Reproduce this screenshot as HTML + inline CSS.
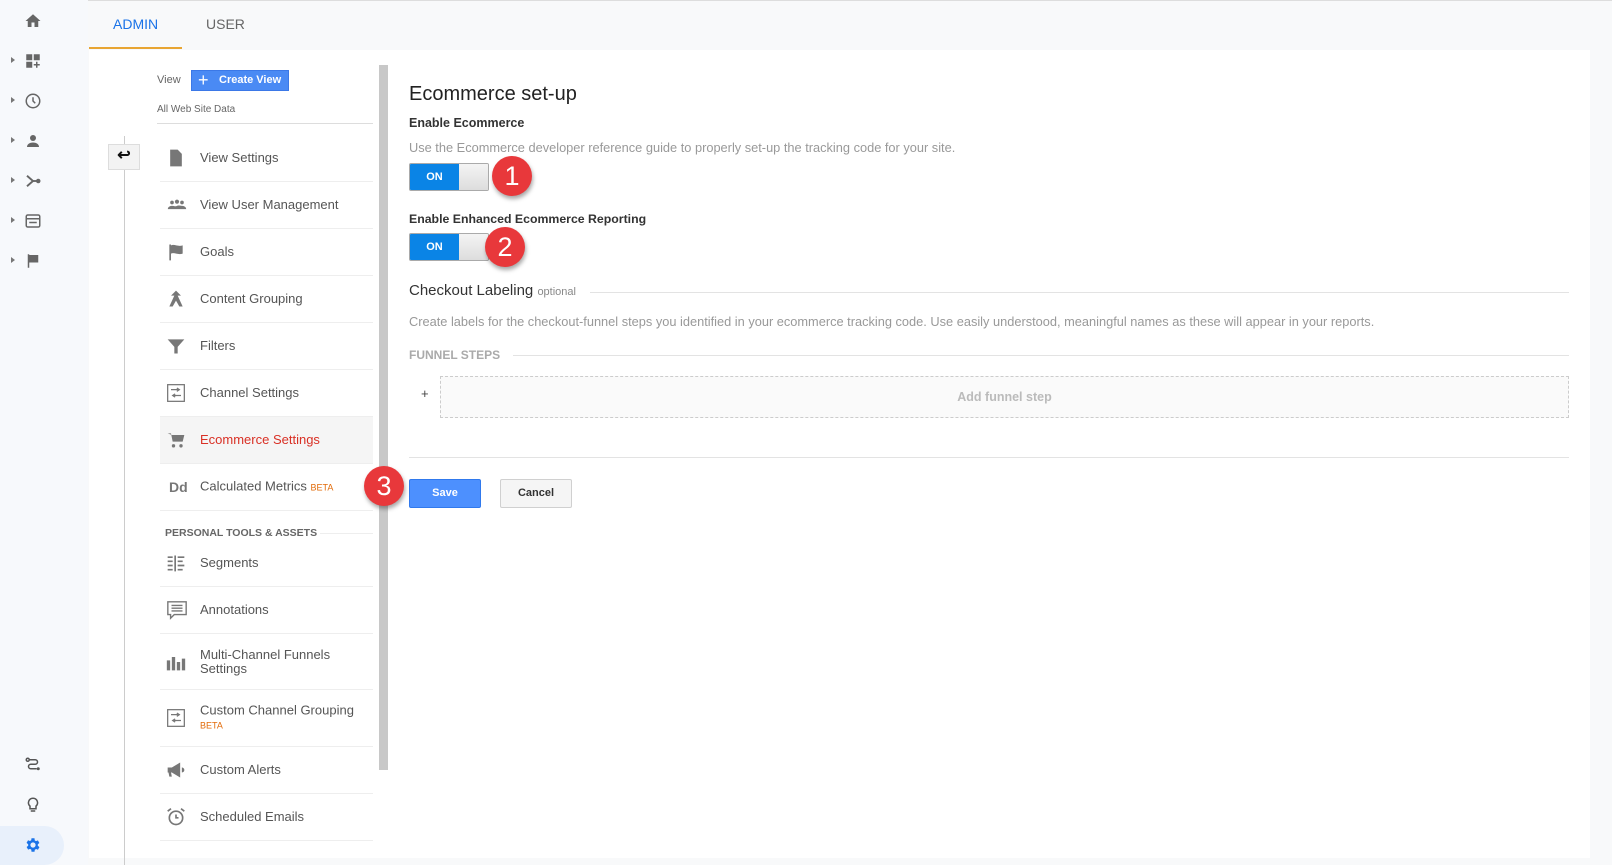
<!DOCTYPE html>
<html><head><meta charset="utf-8"><style>
*{box-sizing:border-box;margin:0;padding:0}
body{width:1612px;height:865px;overflow:hidden;background:#f8f9fa;font-family:"Liberation Sans",Arial,sans-serif;position:relative;color:#444}
.abs{position:absolute}
.rail{left:0;top:0;width:88px;height:865px;background:#f7f9fc}
.ri{position:absolute;left:24px;width:18px;height:18px}
.tri{position:absolute;left:11px;width:0;height:0;border-left:4px solid #777;border-top:3.5px solid transparent;border-bottom:3.5px solid transparent}
.panel{left:89px;top:50px;width:1501px;height:808px;background:#fff}
.mi{position:absolute;left:160px;width:213px;height:47px;border-bottom:1px solid #eee;font-size:13px;color:#555}
.mi span.t{position:absolute;left:40px;top:50%;transform:translateY(-50%);line-height:14px}
.mi svg{position:absolute;left:6px;top:50%;transform:translateY(-50%)}
.badge{position:absolute;width:40px;height:40px;border-radius:50%;background:#e8383b;color:#fff;font-size:27px;text-align:center;line-height:40px;box-shadow:1px 3px 4px rgba(0,0,0,.35)}
.tog{position:absolute;left:409px;width:80px;height:28px;border-radius:2px;overflow:hidden;border:1px solid #aaa}
.tog .on{position:absolute;left:0;top:0;width:49px;height:100%;background:#0a84e6;color:#fff;font-size:11px;font-weight:bold;text-align:center;line-height:27px}
.tog .off{position:absolute;left:49px;top:0;right:0;height:100%;background:linear-gradient(#f4f4f4,#ddd)}
.beta{color:#e26b0a;font-size:9px}
</style></head><body>
<div class="abs" style="left:0;top:0;width:1612px;height:1px;background:#ddd"></div>
<div class="abs rail">
<svg class="ri" style="top:12px" viewBox="0 0 24 24"><path d="M10 20v-6h4v6h5v-8h3L12 3 2 12h3v8z" fill="#666"/></svg>
<div class="tri" style="top:57px"></div><svg class="ri" style="top:52px" viewBox="0 0 24 24"><path d="M3 3h8v8H3zM13 3h8v8h-8zM3 13h8v8H3zM16 13h2v3h3v2h-3v3h-2v-3h-3v-2h3z" fill="#666"/></svg>
<div class="tri" style="top:97px"></div><svg class="ri" style="top:92px" viewBox="0 0 24 24"><circle cx="12" cy="12" r="9" fill="none" stroke="#666" stroke-width="2"/><path d="M12 7v5l3 3" fill="none" stroke="#666" stroke-width="2"/></svg>
<div class="tri" style="top:137px"></div><svg class="ri" style="top:132px" viewBox="0 0 24 24"><circle cx="12" cy="8" r="4" fill="#666"/><path d="M4 20c0-4 4-6 8-6s8 2 8 6z" fill="#666"/></svg>
<div class="tri" style="top:177px"></div><svg class="ri" style="top:172px" viewBox="0 0 24 24"><path d="M4 5l8 7-8 7" fill="none" stroke="#666" stroke-width="2.5"/><path d="M12 12h6" stroke="#666" stroke-width="2.5"/><circle cx="19" cy="12" r="3" fill="#666"/></svg>
<div class="tri" style="top:217px"></div><svg class="ri" style="top:212px" viewBox="0 0 24 24"><rect x="3" y="4" width="18" height="16" rx="2" fill="none" stroke="#666" stroke-width="2"/><path d="M3 9h18M7 14h10" stroke="#666" stroke-width="2"/></svg>
<div class="tri" style="top:257px"></div><svg class="ri" style="top:252px" viewBox="0 0 24 24"><path d="M5 3v18h2v-7h12V4H7V3z" fill="#666"/></svg>
<svg class="ri" style="top:756px" viewBox="0 0 24 24"><circle cx="5" cy="5" r="2" fill="none" stroke="#555" stroke-width="2"/><path d="M7 5h8a3 3 0 010 6H9a3 3 0 000 6h8" fill="none" stroke="#555" stroke-width="2"/><circle cx="19" cy="17" r="2" fill="#555"/></svg>
<svg class="ri" style="top:796px" viewBox="0 0 24 24"><path d="M12 3a6 6 0 00-4 10.5V17h8v-3.5A6 6 0 0012 3zM9 20h6" fill="none" stroke="#555" stroke-width="2"/></svg>
<div class="abs" style="left:0;top:826px;width:64px;height:39px;background:#e8f0fb;border-radius:0 20px 20px 0"></div>
<svg class="ri" style="top:836px" viewBox="0 0 24 24"><path d="M19.4 13a7.5 7.5 0 000-2l2.1-1.6-2-3.5-2.5 1a7 7 0 00-1.700-1L15 3h-4l-.4 2.7a7 7 0 00-1.7 1l-2.5-1-2 3.5L6.6 11a7.5 7.5 0 000 2l-2.1 1.6 2 3.5 2.5-1a7 7 0 001.7 1L11 21h4l.4-2.7a7 7 0 001.7-1l2.5 1 2-3.5zM13 15.5a3.5 3.5 0 110-7 3.5 3.5 0 010 7z" fill="#1a73e8" transform="translate(-1 0)"/></svg>
</div>
<div class="abs" style="left:113px;top:16px;font-size:14px;color:#1a73e8">ADMIN</div>
<div class="abs" style="left:206px;top:16px;font-size:14px;color:#666">USER</div>
<div class="abs" style="left:89px;top:47px;width:93px;height:2px;background:#e8a532"></div>
<div class="abs panel"></div>
<div class="abs" style="left:157px;top:74px;font-size:11px;color:#666">View</div>
<div class="abs" style="left:191px;top:70px;width:98px;height:21px;background:#4a8af4;border:1px solid #3b78e7;color:#fff;font-size:11px;font-weight:bold;line-height:19px;padding-left:27px">Create View</div>
<div class="abs" style="left:198px;top:73px;color:#fff;font-size:18px;line-height:14px">+</div>
<div class="abs" style="left:157px;top:104px;font-size:10px;color:#666">All Web Site Data</div>
<div class="abs" style="left:157px;top:123px;width:216px;height:1px;background:#ddd"></div>
<div class="abs" style="left:124px;top:136px;width:1px;height:729px;background:#ccc"></div>
<div class="abs" style="left:108px;top:144px;width:32px;height:26px;background:#f3f3f3;border:1px solid #ddd;font-size:16px;font-weight:bold;text-align:center;line-height:22px;color:#111">↩</div>
<div class="abs" style="left:379px;top:65px;width:9px;height:705px;background:#c8c8c8"></div>

<div class="mi" style="top:135px"><svg width="20" height="20" viewBox="0 0 24 24"><path d="M5 2h9l5 5v15H5z" fill="#777"/></svg><span class="t">View Settings</span></div>
<div class="mi" style="top:182px"><svg width="22" height="20" viewBox="0 0 24 24"><circle cx="6" cy="9" r="2.2" fill="#777"/><circle cx="12" cy="8" r="2.5" fill="#777"/><circle cx="18" cy="9" r="2.2" fill="#777"/><path d="M1 17c0-3 3-4 5-4s5 1 6 0 4 0 6 0 5 1 5 4z" fill="#777"/></svg><span class="t">View User Management</span></div>
<div class="mi" style="top:229px"><svg width="20" height="20" viewBox="0 0 24 24"><path d="M4 3v19h2v-8c4-2 8 2 14 0V4c-6 2-10-2-14 0V3z" fill="#777"/></svg><span class="t">Goals</span></div>
<div class="mi" style="top:276px"><svg width="20" height="20" viewBox="0 0 24 24"><path d="M12 2l-6 6h4L4 21h4l4-7 4 7h4L14 8h4z" fill="#777"/></svg><span class="t">Content Grouping</span></div>
<div class="mi" style="top:323px"><svg width="20" height="20" viewBox="0 0 24 24"><path d="M2 4h20l-8 9v8h-4v-8z" fill="#777"/></svg><span class="t">Filters</span></div>
<div class="mi" style="top:370px"><svg width="20" height="20" viewBox="0 0 24 24"><rect x="2" y="2" width="20" height="20" fill="none" stroke="#777" stroke-width="1.5"/><path d="M6 8h10M13 6l3 2-3 2M18 15H8M11 13l-3 2 3 2" fill="none" stroke="#777" stroke-width="1.5"/></svg><span class="t">Channel Settings</span></div>
<div class="mi" style="top:417px;background:#f5f5f5"><svg width="20" height="20" viewBox="0 0 24 24"><path d="M2 4h4l2 10h12l2-8H7" fill="#777"/><circle cx="9" cy="19" r="2" fill="#777"/><circle cx="18" cy="19" r="2" fill="#777"/></svg><span class="t" style="color:#d93025">Ecommerce Settings</span></div>
<div class="mi" style="top:464px"><span style="position:absolute;left:9px;top:15px;font-weight:bold;font-size:14px;color:#777">Dd</span><span class="t">Calculated Metrics <span class="beta">BETA</span></span></div>
<div class="abs" style="left:165px;top:527px;font-size:10.5px;font-weight:bold;color:#666">PERSONAL TOOLS &amp; ASSETS</div>
<div class="abs" style="left:320px;top:533px;width:53px;height:1px;background:#eee"></div>
<div class="mi" style="top:540px"><svg width="20" height="20" viewBox="0 0 24 24"><path d="M2 5h6M2 10h6M2 15h6M2 20h6M11 3v19M14 5h8M14 10h6M14 15h8M14 20h6" stroke="#777" stroke-width="2"/></svg><span class="t">Segments</span></div>
<div class="mi" style="top:587px"><svg width="22" height="22" viewBox="0 0 24 24"><path d="M2 3h20v14H9l-4 4v-4H2z" fill="none" stroke="#777" stroke-width="1.5"/><path d="M6 7h12M6 10h12M6 13h12" stroke="#777" stroke-width="1.5"/></svg><span class="t">Annotations</span></div>
<div class="mi" style="top:634px;height:56px"><svg width="20" height="20" viewBox="0 0 24 24"><path d="M1 10h4v12H1zM7 6h4v16H7zM13 12h4v10h-4zM19 8h4v14h-4z" fill="#777"/></svg><span class="t">Multi-Channel Funnels<br>Settings</span></div>
<div class="mi" style="top:690px;height:57px"><svg width="20" height="20" viewBox="0 0 24 24"><rect x="2" y="2" width="20" height="20" fill="none" stroke="#777" stroke-width="1.5"/><path d="M6 8h10M13 6l3 2-3 2M18 15H8M11 13l-3 2 3 2" fill="none" stroke="#777" stroke-width="1.5"/></svg><span class="t">Custom Channel Grouping<br><span class="beta">BETA</span></span></div>
<div class="mi" style="top:747px"><svg width="20" height="20" viewBox="0 0 24 24"><path d="M2 9h5l10-6v18L7 15H6l1 5H4l-1-5H2z" fill="#777"/><path d="M19 9a3 3 0 010 6" fill="#777"/></svg><span class="t">Custom Alerts</span></div>
<div class="mi" style="top:794px"><svg width="20" height="20" viewBox="0 0 24 24"><circle cx="12" cy="13" r="8" fill="none" stroke="#777" stroke-width="2"/><path d="M12 9v4h3M2 5l4-3M22 5l-4-3" fill="none" stroke="#777" stroke-width="2"/></svg><span class="t">Scheduled Emails</span></div>

<div class="abs" style="left:409px;top:83px;font-size:20px;color:#222">Ecommerce set-up</div>
<div class="abs" style="left:409px;top:116px;font-size:12.5px;font-weight:bold;color:#333">Enable Ecommerce</div>
<div class="abs" style="left:409px;top:140px;font-size:12.8px;color:#999">Use the Ecommerce developer reference guide to properly set-up the tracking code for your site.</div>
<div class="tog" style="top:163px"><div class="on">ON</div><div class="off"></div></div>
<div class="badge" style="left:492px;top:156px">1</div>
<div class="abs" style="left:409px;top:212px;font-size:12.3px;font-weight:bold;color:#333">Enable Enhanced Ecommerce Reporting</div>
<div class="tog" style="top:233px"><div class="on">ON</div><div class="off"></div></div>
<div class="badge" style="left:485px;top:227px">2</div>
<div class="abs" style="left:409px;top:282px;font-size:15px;color:#333">Checkout Labeling <span style="font-size:11px;color:#888">optional</span></div>
<div class="abs" style="left:590px;top:292px;width:979px;height:1px;background:#e3e3e3"></div>
<div class="abs" style="left:409px;top:314px;font-size:12.8px;color:#999">Create labels for the checkout-funnel steps you identified in your ecommerce tracking code. Use easily understood, meaningful names as these will appear in your reports.</div>
<div class="abs" style="left:409px;top:348px;font-size:12px;font-weight:bold;color:#aaa">FUNNEL STEPS</div>
<div class="abs" style="left:513px;top:355px;width:1056px;height:1px;background:#e3e3e3"></div>
<div class="abs" style="left:421px;top:386px;font-size:13px;color:#444">+</div>
<div class="abs" style="left:440px;top:376px;width:1129px;height:42px;border:1px dashed #ccc;background:#fafafa;text-align:center;line-height:40px;font-size:12.5px;font-weight:bold;color:#bbb">Add funnel step</div>
<div class="abs" style="left:409px;top:457px;width:1160px;height:1px;background:#e3e3e3"></div>
<div class="abs" style="left:409px;top:479px;width:72px;height:29px;background:#4d90fe;border:1px solid #3079ed;border-radius:2px;color:#fff;font-size:11px;font-weight:bold;text-align:center;line-height:27px">Save</div>
<div class="abs" style="left:500px;top:479px;width:72px;height:29px;background:#f5f5f5;border:1px solid #d0d0d0;border-radius:2px;color:#333;font-size:11px;font-weight:bold;text-align:center;line-height:27px">Cancel</div>
<div class="badge" style="left:364px;top:466px">3</div>
</body></html>
